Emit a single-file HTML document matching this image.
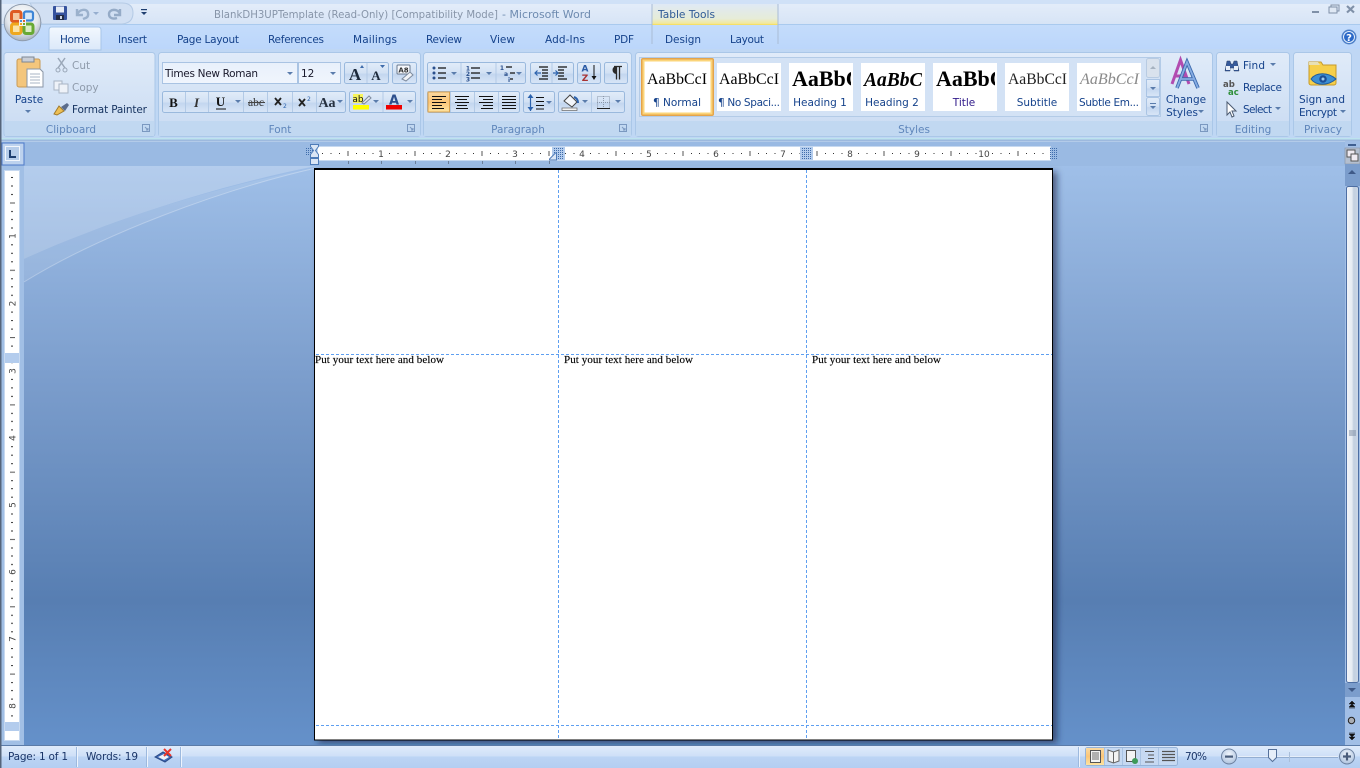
<!DOCTYPE html>
<html><head><meta charset="utf-8"><title>BlankDH3UPTemplate - Microsoft Word</title>
<style>
html,body{margin:0;padding:0;background:#bfdbff;overflow:hidden}
svg{display:block}
text{font-family:"DejaVu Sans","Liberation Sans",sans-serif;font-size:10.5px;fill:#15428b;white-space:pre}
.s{font-family:"Liberation Serif",serif;fill:#000}
.d{fill:#000;font-family:"Liberation Serif",serif;font-size:11px;stroke:#000;stroke-width:.15px}
.g{fill:#a4adb9}
.f{fill:#5f86bb;font-size:10.5px}
.k{fill:#000}
.r{fill:#444;font-size:9px}
.c{text-anchor:middle}
</style></head><body>
<svg width="1360" height="768" viewBox="0 0 1360 768" xmlns="http://www.w3.org/2000/svg">
<defs>
<linearGradient id="gt" x1="0" y1="0" x2="0" y2="1"><stop offset="0" stop-color="#e6eefa"/><stop offset="1" stop-color="#d6e4f6"/></linearGradient>
<linearGradient id="gtab" x1="0" y1="0" x2="0" y2="1"><stop offset="0" stop-color="#c4dcfb"/><stop offset="1" stop-color="#bbd6fb"/></linearGradient>
<linearGradient id="ggr" x1="0" y1="0" x2="0" y2="1"><stop offset="0" stop-color="#e0ebf9"/><stop offset="1" stop-color="#c9dbf2"/></linearGradient>
<linearGradient id="gbtn" x1="0" y1="0" x2="0" y2="1"><stop offset="0" stop-color="#e2ecf9"/><stop offset=".5" stop-color="#d2e1f4"/><stop offset=".55" stop-color="#c3d6ef"/><stop offset="1" stop-color="#d9e6f7"/></linearGradient>
<linearGradient id="gbox" x1="0" y1="0" x2="0" y2="1"><stop offset="0" stop-color="#e8f0fb"/><stop offset="1" stop-color="#f0f5fd"/></linearGradient>
<linearGradient id="gor" x1="0" y1="0" x2="0" y2="1"><stop offset="0" stop-color="#fbd9a0"/><stop offset=".5" stop-color="#fbc679"/><stop offset="1" stop-color="#fde3a0"/></linearGradient>
<linearGradient id="ghome" x1="0" y1="0" x2="0" y2="1"><stop offset="0" stop-color="#f3f8fe"/><stop offset="1" stop-color="#dce9f9"/></linearGradient>
<linearGradient id="gtt" x1="0" y1="0" x2="0" y2="1"><stop offset="0" stop-color="#dfe9f5"/><stop offset=".7" stop-color="#e6ecd8"/><stop offset=".93" stop-color="#f3e89a"/><stop offset="1" stop-color="#f8dc4a"/></linearGradient>
<linearGradient id="gdoc" x1="0" y1="0" x2="0" y2="1"><stop offset="0" stop-color="#9fbfe8"/><stop offset=".37" stop-color="#7b9dcc"/><stop offset=".75" stop-color="#577eb2"/><stop offset="1" stop-color="#6591ca"/></linearGradient>
<linearGradient id="gst" x1="0" y1="0" x2="0" y2="1"><stop offset="0" stop-color="#dfebfb"/><stop offset=".45" stop-color="#cfe0f7"/><stop offset=".5" stop-color="#bcd4f4"/><stop offset="1" stop-color="#b4cef1"/></linearGradient>
<linearGradient id="gsb" x1="0" y1="0" x2="1" y2="0"><stop offset="0" stop-color="#f2f5f9"/><stop offset=".45" stop-color="#e6ebf2"/><stop offset=".6" stop-color="#c3d0e0"/><stop offset="1" stop-color="#cbd7e6"/></linearGradient>
<radialGradient id="gorb" cx=".5" cy=".35" r=".7"><stop offset="0" stop-color="#ffffff"/><stop offset=".6" stop-color="#e3e7ec"/><stop offset="1" stop-color="#9aa7b8"/></radialGradient>
<radialGradient id="gzoom" cx=".5" cy=".35" r=".7"><stop offset="0" stop-color="#f0f5fc"/><stop offset="1" stop-color="#a9bfdc"/></radialGradient>
<filter id="bl" x="-5%" y="-5%" width="110%" height="110%"><feGaussianBlur stdDeviation="3.5"/></filter>
<pattern id="hr" x="314" y="147" width="67" height="13" patternUnits="userSpaceOnUse">
<rect x="8" y="6" width="1" height="1" fill="#333"/><rect x="16.5" y="6" width="1" height="1" fill="#333"/><rect x="25" y="6" width="1" height="1" fill="#333"/><rect x="33.5" y="4" width="1" height="5" fill="#555"/><rect x="42" y="6" width="1" height="1" fill="#333"/><rect x="50" y="6" width="1" height="1" fill="#333"/><rect x="58.5" y="6" width="1" height="1" fill="#333"/>
</pattern>
<pattern id="vr" x="5" y="169" width="14" height="67.3" patternUnits="userSpaceOnUse">
<rect x="6" y="8" width="2" height="1" fill="#333"/><rect x="6" y="16.5" width="2" height="1" fill="#333"/><rect x="6" y="25" width="2" height="1" fill="#333"/><rect x="5" y="33.5" width="5" height="1" fill="#555"/><rect x="6" y="42" width="2" height="1" fill="#333"/><rect x="6" y="50" width="2" height="1" fill="#333"/><rect x="6" y="58.5" width="2" height="1" fill="#333"/>
</pattern>
<pattern id="grid" x="0" y="0" width="2" height="2" patternUnits="userSpaceOnUse"><rect width="1" height="1" fill="#3f6cab"/></pattern>
<path id="ar" d="M0 0h6l-3 3z" fill="#5a7cac"/>
<path id="ad" d="M0 0h6l-3 3z" fill="#1f3f70"/>
</defs>

<!-- title bar -->
<rect width="1360" height="25" fill="url(#gt)"/>
<rect width="1360" height="4" fill="#d0e1f7"/>
<rect y="24" width="1360" height="1" fill="#a9caee"/>
<rect y="25" width="1360" height="25" fill="url(#gtab)"/>
<rect y="49" width="1360" height="92" fill="#bfd7f4"/>
<rect y="138" width="1360" height="1.5" fill="#bde3ee"/>
<rect y="139.5" width="1360" height="2" fill="#9db9de"/>

<!-- QAT -->
<path d="M30 3H122Q133 3 133 13T122 24H42Z" fill="#d2e0f3" stroke="#b4cae5"/>
<rect x="53" y="6" width="14" height="14" rx="1" fill="#35529e"/><rect x="56" y="6.500" width="8" height="6" fill="#e6ecf7"/><rect x="56" y="15" width="8" height="5" fill="#222b44"/><rect x="60" y="16" width="2" height="3" fill="#cfd7e6"/>
<path d="M77 9v6h6M77 15C79 9 87 8 88 13S85 18 83 19" fill="none" stroke="#9bb1cc" stroke-width="2.400"/>
<use href="#ar" x="93" y="12" opacity=".5"/>
<path d="M120 9v6h-6M120 14C118 8 109 9 109 14S114 19 117 18" fill="none" stroke="#95abc7" stroke-width="2.400"/>
<rect x="141" y="9" width="6" height="1.200" fill="#1f3f70"/><use href="#ad" x="141" y="12"/>

<text x="214" y="18" class="g" textLength="284" lengthAdjust="spacingAndGlyphs" style="fill:#8795a9">BlankDH3UPTemplate (Read-Only) [Compatibility Mode]</text>
<text x="502" y="18" textLength="89" lengthAdjust="spacingAndGlyphs" style="fill:#6e8bb0">- Microsoft Word</text>

<!-- Table tools -->
<rect x="652" y="4" width="126" height="21" fill="url(#gtt)"/>
<path d="M652 4V44M778 4V44" stroke="#a9bcd6" fill="none"/>
<text x="658" y="18" textLength="57" lengthAdjust="spacingAndGlyphs" style="fill:#2f5a96">Table Tools</text>

<!-- window controls -->
<rect x="1312" y="11" width="7" height="2" fill="#7f90a8"/>
<rect x="1331" y="5" width="8" height="6" fill="none" stroke="#7f90a8"/><rect x="1329" y="7" width="8" height="6" fill="#dfe8f4" stroke="#7f90a8"/>
<path d="M1347 6L1354 12.500M1354 6L1347 12.500" stroke="#7f90a8" stroke-width="2.200"/>

<!-- tabs -->
<path d="M49 50V30Q49 27 52 27H98Q101 27 101 30V50Z" fill="url(#ghome)" stroke="#a7c5e8"/>
<g>
<text x="60" y="43" textLength="30">Home</text>
<text x="118" y="43" textLength="29">Insert</text>
<text x="177" y="43" textLength="62">Page Layout</text>
<text x="268" y="43" textLength="56">References</text>
<text x="353" y="43" textLength="44">Mailings</text>
<text x="426" y="43" textLength="36">Review</text>
<text x="490" y="43" textLength="25">View</text>
<text x="545" y="43" textLength="40">Add-Ins</text>
<text x="614" y="43" textLength="20">PDF</text>
<text x="665" y="43" textLength="36">Design</text>
<text x="730" y="43" textLength="34">Layout</text>
</g>
<circle cx="1349" cy="37" r="7" fill="#2f6fd0" stroke="#5a88c8" stroke-width="1"/>
<circle cx="1349" cy="37" r="5.500" fill="#2a68c8" stroke="#e6eff9" stroke-width="1"/>
<text x="1349" y="41" class="c" style="font-size:10px;font-weight:bold;fill:#fff">?</text>

<!-- orb -->
<circle cx="22.500" cy="22.500" r="18.300" fill="url(#gorb)" stroke="#8e9bad"/>
<rect x="11.500" y="11.500" width="9.500" height="10" rx="2" fill="#f5c9a0" stroke="#de5c24" stroke-width="3"/>
<rect x="24" y="11.500" width="9" height="9" rx="2" fill="#d9e8f7" stroke="#3f86d6" stroke-width="2.200"/>
<rect x="11.500" y="24" width="9.500" height="9.500" rx="2" fill="#fbe4a8" stroke="#efa81e" stroke-width="3"/>
<rect x="24" y="24" width="9" height="9.500" rx="2" fill="#dcedc4" stroke="#68a934" stroke-width="3"/>
<rect x="19" y="19" width="7" height="7" fill="#f2f2f2"/><rect x="20" y="20" width="2" height="2" fill="#4b90d8"/><rect x="23" y="20" width="2" height="2" fill="#e0682a"/><rect x="20" y="23" width="2" height="2" fill="#efa81e"/><rect x="23" y="23" width="2" height="2" fill="#6fae3a"/>

<!-- ribbon groups -->
<g stroke="#aac7e8" fill="url(#ggr)">
<rect x="4" y="52.500" width="151" height="84" rx="3"/>
<rect x="158.500" y="52.500" width="262" height="84" rx="3"/>
<rect x="423.500" y="52.500" width="208" height="84" rx="3"/>
<rect x="635.500" y="52.500" width="577" height="84" rx="3"/>
<rect x="1216.500" y="52.500" width="73" height="84" rx="3"/>
<rect x="1293.500" y="52.500" width="58" height="84" rx="3"/>
</g>
<g fill="#c1d8f1">
<rect x="5" y="121" width="149" height="15"/><rect x="159" y="121" width="261" height="15"/><rect x="424" y="121" width="207" height="15"/><rect x="636" y="121" width="576" height="15"/><rect x="1217" y="121" width="72" height="15"/><rect x="1294" y="121" width="57" height="15"/>
</g>
<text x="71" y="133" class="c f">Clipboard</text>
<text x="280" y="133" class="c f">Font</text>
<text x="518" y="133" class="c f">Paragraph</text>
<text x="914" y="133" class="c f">Styles</text>
<text x="1253" y="133" class="c f">Editing</text>
<text x="1323" y="133" class="c f">Privacy</text>
<!-- launchers -->
<g fill="none" stroke="#7a98c0">
<path d="M142.500 131.500v-7h7v7zM145 127l3 3M148 128v2h-2" />
<path d="M407.500 131.500v-7h7v7zM410 127l3 3M413 128v2h-2"/>
<path d="M619.500 131.500v-7h7v7zM622 127l3 3M625 128v2h-2"/>
<path d="M1200.500 131.500v-7h7v7zM1203 127l3 3M1206 128v2h-2"/>
</g>

<!-- Clipboard -->
<rect x="17" y="59" width="23" height="28" rx="2" fill="#f4c67c" stroke="#c89a55"/>
<rect x="22" y="57" width="12" height="5" fill="#c9ced6" stroke="#7d8794"/>
<path d="M27 69h13l3 3v15h-16z" fill="#fff" stroke="#8a95a5"/>
<path d="M30 74h10M30 77h10M30 80h10M30 83h10" stroke="#a9b4c4"/>
<text x="29" y="103" class="c">Paste</text>
<use href="#ar" x="25" y="110"/>
<path d="M58 58l7 10M65 58l-7 10" stroke="#9aa7b8" stroke-width="1.500"/><circle cx="58" cy="70" r="2" fill="none" stroke="#9aa7b8"/><circle cx="65" cy="70" r="2" fill="none" stroke="#9aa7b8"/>
<text x="72" y="69" style="fill:#8f9bab">Cut</text>
<rect x="54" y="81" width="8" height="9" fill="#eef2f8" stroke="#a8b4c4"/><rect x="59" y="84" width="9" height="9" fill="#eef2f8" stroke="#a8b4c4"/>
<text x="72" y="91" style="fill:#8f9bab">Copy</text>
<path d="M54 114l5-8 5 5-7 4z" fill="#eebf54" stroke="#a07a2a"/><path d="M61 107l6-4 2 2-4 6z" fill="#5a6c8c"/>
<text x="72" y="113" textLength="75" style="fill:#15325f">Format Painter</text>

<!-- Font row 1 -->
<rect x="162.500" y="62.500" width="135" height="21" fill="url(#gbox)" stroke="#a9c3e3"/>
<rect x="298.500" y="62.500" width="42" height="21" fill="url(#gbox)" stroke="#a9c3e3"/>
<text x="165" y="77" textLength="93" style="fill:#1a1a2c">Times New Roman</text>
<text x="301" y="77" style="fill:#1a1a2c">12</text>
<use href="#ar" x="287" y="72"/><use href="#ar" x="330" y="72"/>
<rect x="344.500" y="62.500" width="44" height="21" rx="2" fill="url(#gbtn)" stroke="#9ab9dd"/>
<path d="M367 63V83" stroke="#b3cae6"/>
<text x="355" y="80" class="c s" style="font-size:17px;font-weight:bold;fill:#1d2a3c">A</text>
<text x="376" y="80" class="c s" style="font-size:13px;font-weight:bold;fill:#1d2a3c">A</text>
<path d="M360 68l2-3 2 3z" fill="#3f6cab"/><path d="M380 65h5l-2.500 3z" fill="#3f6cab"/>
<rect x="392.500" y="62.500" width="24" height="21" rx="2" fill="url(#gbtn)" stroke="#9ab9dd"/>
<rect x="397" y="65" width="13" height="9" rx="1" fill="#f6f8fc" stroke="#6a7a90"/>
<text x="403.500" y="72.500" class="c" style="font-size:7px;fill:#333;font-weight:bold">A8</text>
<path d="M402 79l8-7 3 3-7 6z" fill="#f1f3f7" stroke="#7d8b9e"/>

<!-- Font row 2 -->
<rect x="162.500" y="91.500" width="183" height="21" rx="2" fill="url(#gbtn)" stroke="#9ab9dd"/>
<path d="M185.500 92V112M208.500 92V112M243.500 92V112M267.500 92V112M292.500 92V112M316.500 92V112" stroke="#b3cae6"/>
<text x="173.500" y="107" class="c s" style="font-size:13px;font-weight:bold;fill:#111">B</text>
<text x="196.500" y="107" class="c s" style="font-size:13px;font-style:italic;font-weight:bold;fill:#333">I</text>
<text x="220.500" y="106" class="c s" style="font-size:13px;font-weight:bold;fill:#111">U</text>
<rect x="216" y="108.500" width="10" height="1" fill="#111"/>
<use href="#ar" x="235" y="100"/>
<text x="256" y="106" class="c s" style="font-size:11.500px;fill:#333">abc</text>
<rect x="248" y="102" width="17" height="1" fill="#444"/>
<path d="M275 98l6 7M281 98l-6 7" stroke="#222" stroke-width="1.800"/><text x="283" y="108" style="font-size:6px;fill:#2a62ad">2</text>
<path d="M299 99l6 7M305 99l-6 7" stroke="#222" stroke-width="1.800"/><text x="307" y="101" style="font-size:6px;fill:#2a62ad">2</text>
<text x="327" y="107" class="c s" style="font-size:14px;font-weight:bold;fill:#26303f">Aa</text>
<use href="#ar" x="337" y="100"/>
<rect x="349.500" y="91.500" width="66" height="21" rx="2" fill="url(#gbtn)" stroke="#9ab9dd"/>
<path d="M383 92V112" stroke="#b3cae6"/>
<rect x="353" y="94" width="10" height="9" fill="#f7f45c"/>
<text x="358" y="102" class="c" style="font-size:9px;fill:#111">ab</text>
<path d="M362 103l7-7 2 2-7 6z" fill="#e9edf3" stroke="#7d8b9e"/>
<rect x="353" y="105" width="16" height="4.500" fill="#ffff00"/>
<use href="#ar" x="373" y="100"/>
<text x="394" y="104.500" class="c" style="font-size:13px;font-weight:bold;fill:#2d4f8c">A</text>
<rect x="386" y="105" width="16" height="4.500" fill="#ee0000"/>
<use href="#ar" x="407" y="100"/>

<!-- Paragraph row 1 -->
<rect x="427.500" y="62.500" width="98" height="21" rx="2" fill="url(#gbtn)" stroke="#9ab9dd"/>
<path d="M461 63V83M496 63V83" stroke="#b3cae6"/>
<g fill="#2a4f8c"><circle cx="434" cy="68" r="1.500"/><circle cx="434" cy="73" r="1.500"/><circle cx="434" cy="78" r="1.500"/></g>
<path d="M438 68h8M438 73h8M438 78h8M471 68h9M471 73h9M471 78h9M506 67h6M510 73h5M510 79h3" stroke="#111" stroke-width="1.200"/>
<text x="468" y="70.500" class="c" style="font-size:6px;fill:#2a4f8c;font-weight:bold">1</text><text x="468" y="76" class="c" style="font-size:6px;fill:#2a4f8c;font-weight:bold">2</text><text x="468" y="81.500" class="c" style="font-size:6px;fill:#2a4f8c;font-weight:bold">3</text>
<text x="502" y="70" class="c" style="font-size:6px;fill:#2a4f8c;font-weight:bold">1</text><text x="506" y="76" class="c" style="font-size:6px;fill:#2a4f8c;font-weight:bold">a</text><text x="509" y="82" class="c" style="font-size:6px;fill:#2a4f8c;font-weight:bold">i</text>
<use href="#ar" x="451" y="72"/><use href="#ar" x="486" y="72"/><use href="#ar" x="516" y="72"/>
<rect x="530.500" y="62.500" width="43" height="21" rx="2" fill="url(#gbtn)" stroke="#9ab9dd"/>
<path d="M552 63V83" stroke="#b3cae6"/>
<path d="M539 67h9M542 70h6M542 73h6M542 76h6M539 79h9M558 67h9M558 70h6M558 73h6M558 76h6M558 79h9" stroke="#111" stroke-width="1.200"/>
<path d="M541 73h-6m2.500-2.500L535 73l2.500 2.500M553 73h5m-2.500-2.500L558 73l-2.500 2.500" fill="none" stroke="#2b62ad" stroke-width="1.200"/>
<rect x="577.500" y="62.500" width="23" height="21" rx="2" fill="url(#gbtn)" stroke="#9ab9dd"/>
<text x="585" y="71.500" class="c" style="font-size:9px;font-weight:bold;fill:#2a5aa5">A</text><text x="585" y="81" class="c" style="font-size:9px;font-weight:bold;fill:#a83232">Z</text>
<path d="M594 65v13" stroke="#111"/><path d="M591.500 76l2.500 4 2.500-4z" fill="#111"/>
<rect x="604.500" y="62.500" width="23" height="21" rx="2" fill="url(#gbtn)" stroke="#9ab9dd"/>
<path d="M616.500 66.500a3.500 3.500 0 0 0 0 7z" fill="#2a2a2a" stroke="#2a2a2a"/><path d="M616.500 66.500V79.500M619.500 66.500V79.500M614 66.500H622" fill="none" stroke="#2a2a2a" stroke-width="1.300"/>

<!-- Paragraph row 2 -->
<rect x="427.500" y="91.500" width="92" height="21" rx="2" fill="url(#gbtn)" stroke="#9ab9dd"/>
<rect x="428" y="92" width="21.500" height="20" fill="url(#gor)" stroke="#d9a14f"/>
<path d="M450.500 92V112M474.500 92V112M498.500 92V112" stroke="#b3cae6"/>
<path d="M432 96.500h14M432 99.500h10M432 102.500h14M432 105.500h10M432 108.500h12" stroke="#111"/>
<path d="M455 96.500h14M457 99.500h10M455 102.500h14M457 105.500h10M456 108.500h12" stroke="#111"/>
<path d="M479 96.500h14M483 99.500h10M479 102.500h14M483 105.500h10M481 108.500h12" stroke="#111"/>
<path d="M502 96.500h14M502 99.500h14M502 102.500h14M502 105.500h14M502 108.500h14" stroke="#111"/>
<rect x="523.500" y="91.500" width="31" height="21" rx="2" fill="url(#gbtn)" stroke="#9ab9dd"/>
<path d="M530.500 95v16" stroke="#2b62ad" stroke-width="1.200"/><path d="M527.500 98l3-4 3 4zM527.500 107l3 4 3-4z" fill="#2b62ad"/>
<path d="M536 97.500h8M536 101.500h8M536 105.500h8M536 109h8" stroke="#111" stroke-width="1.100"/>
<use href="#ar" x="546" y="101"/>
<rect x="558.500" y="91.500" width="66" height="21" rx="2" fill="url(#gbtn)" stroke="#9ab9dd"/>
<path d="M591.500 92V112" stroke="#b3cae6"/>
<path d="M564 101l6-6 7 7-5 5z" fill="#f3f6fb" stroke="#444"/><path d="M574 97c3 1 4 3 4 6" fill="none" stroke="#2b62ad" stroke-width="2"/>
<rect x="562" y="108" width="15" height="2.500" fill="#f3f3f3" stroke="#666" stroke-width=".7"/>
<use href="#ar" x="582" y="100"/>
<rect x="597.500" y="96.500" width="12" height="12" fill="none" stroke="#8b98aa" stroke-dasharray="1 1"/><path d="M603.500 96v13M597 102.500h13" stroke="#8b98aa" stroke-dasharray="1 1"/><path d="M597 108.500h13" stroke="#222"/>
<use href="#ar" x="615" y="100"/>

<!-- Styles gallery -->
<rect x="639.500" y="57.500" width="521" height="59" fill="#d3e2f5" stroke="#b3cbe7"/>
<rect x="642" y="59" width="71" height="56" rx="1" fill="#fff" stroke="#e4a44a" stroke-width="2"/>
<rect x="643.500" y="60.500" width="68" height="53" fill="none" stroke="#fbd479" stroke-width="2"/>
<g fill="#fff"><rect x="717" y="63" width="64" height="48"/><rect x="789" y="63" width="64" height="48"/><rect x="861" y="63" width="64" height="48"/><rect x="933" y="63" width="64" height="48"/><rect x="1005" y="63" width="64" height="48"/><rect x="1077" y="63" width="64" height="48"/></g>
<text x="647" y="84" class="s" style="font-size:16px" textLength="60" lengthAdjust="spacingAndGlyphs">AaBbCcI</text>
<text x="719" y="84" class="s" style="font-size:16px" textLength="60" lengthAdjust="spacingAndGlyphs">AaBbCcI</text>
<svg x="789" y="63" width="62" height="48"><text x="3" y="23" class="s" style="font-size:22px;font-weight:bold">AaBbC</text></svg>
<svg x="861" y="63" width="61" height="48"><text x="3" y="23" class="s" style="font-size:19.500px;font-weight:bold;font-style:italic">AaBbCc</text></svg>
<svg x="933" y="63" width="62" height="48"><text x="3" y="23" class="s" style="font-size:22px;font-weight:bold">AaBbC</text></svg>
<text x="1008" y="84" class="s" style="font-size:16px;fill:#222" textLength="59" lengthAdjust="spacingAndGlyphs">AaBbCcI</text>
<text x="1080" y="84" class="s" style="font-size:16px;font-style:italic;fill:#8a8a8a" textLength="59" lengthAdjust="spacingAndGlyphs">AaBbCcI</text>
<g style="fill:#15428b">
<text x="677" y="106" class="c">¶ Normal</text>
<text x="749" y="106" class="c" textLength="62">¶ No Spaci...</text>
<text x="820" y="106" class="c">Heading 1</text>
<text x="892" y="106" class="c">Heading 2</text>
<text x="964" y="106" class="c" style="fill:#301a8a">Title</text>
<text x="1037" y="106" class="c">Subtitle</text>
<text x="1109" y="106" class="c" textLength="60">Subtle Em...</text>
</g>
<rect x="1146.500" y="58.500" width="13" height="19" rx="2" fill="#d9e2ed" stroke="#b8cbe2"/>
<rect x="1146.500" y="79.500" width="13" height="17" fill="url(#gbtn)" stroke="#aac4e4"/>
<rect x="1146.500" y="97.500" width="13" height="18" rx="2" fill="url(#gbtn)" stroke="#aac4e4"/>
<path d="M1150 69h6l-3-3z" fill="#a6b2c0"/><use href="#ar" x="1150" y="87"/>
<rect x="1150" y="103" width="6" height="1" fill="#5a7cac"/><use href="#ar" x="1150" y="106"/>
<!-- Change styles -->
<path d="M1172 84L1180.500 60L1189 84M1175 76H1187" fill="none" stroke="#b24cb0" stroke-width="3"/>
<path d="M1177 88L1187 62L1198 88M1181 79H1194" fill="none" stroke="#3c69ad" stroke-width="3.600"/>
<path d="M1177 88L1187 62L1198 88M1181 79H1194" fill="none" stroke="#86ade3" stroke-width="1.800"/>
<text x="1186" y="103" class="c">Change</text>
<text x="1182" y="116" class="c">Styles</text>
<use href="#ar" x="1198" y="110"/>

<!-- Editing -->
<path d="M1225 71l2-10h3l1 3h2l1-3h3l2 10h-5v-3h-4v3z" fill="#35599a" stroke="#2a3e66" stroke-width=".5"/><rect x="1226" y="66" width="4" height="4" fill="#e7eef8"/><rect x="1234" y="66" width="4" height="4" fill="#e7eef8"/>
<text x="1243" y="69" textLength="22">Find</text><use href="#ar" x="1270" y="63"/>
<text x="1223" y="87" style="font-size:8.500px;fill:#555;font-weight:bold">ab</text>
<text x="1228" y="95" style="font-size:8.500px;fill:#2f8f3a;font-weight:bold">ac</text>
<text x="1243" y="91" textLength="39">Replace</text>
<path d="M1227 102v13l3-3 2 5 2-1-2-5h4z" fill="#fff" stroke="#4b5a70"/>
<text x="1243" y="113" textLength="29">Select</text><use href="#ar" x="1275" y="107"/>

<!-- Privacy -->
<path d="M1309 62h12l2 3h13v18a2 2 0 0 1-2 2h-23a2 2 0 0 1-2-2z" fill="#f6cf4a" stroke="#c69a2a"/>
<path d="M1309 62h9l2 3h-11z" fill="#e8e0b5"/>
<path d="M1311 79c5-7 17-7 25 0-8 7-20 7-25 0z" fill="#3c8fd4" stroke="#205b9c"/><circle cx="1323" cy="79" r="3.800" fill="#1d4f95"/><circle cx="1323" cy="79" r="1.500" fill="#9ccbf0"/>
<text x="1299" y="103" textLength="46">Sign and</text>
<text x="1299" y="116" textLength="38">Encrypt</text><use href="#ar" x="1340" y="110"/>

<!-- ruler band -->
<rect y="141" width="1360" height="25" fill="#9abae3"/>
<rect y="141" width="1360" height="1" fill="#b3cbe9"/>
<rect x="0" y="166" width="24" height="580" fill="#a1bfe5"/>
<rect x="2" y="143" width="22" height="22" fill="#bdd2ee" stroke="#4d79c8"/>
<rect x="5.500" y="146.500" width="14" height="14" fill="#b7cdea" stroke="#f2f6fc"/>
<path d="M10 150v7h6" fill="none" stroke="#1f3f70" stroke-width="2"/>

<!-- doc bg -->
<rect x="24" y="166" width="1321" height="580" fill="url(#gdoc)"/>
<path d="M24 166H316C220 185 110 220 24 259Z" fill="#fff" fill-opacity=".22"/>
<path d="M24 259C110 220 220 185 316 168C220 190 100 235 24 282Z" fill="#fff" fill-opacity=".09"/>
<path d="M24 282C100 235 220 190 316 168" fill="none" stroke="#fff" stroke-opacity=".28"/>

<!-- vertical ruler -->
<rect x="5" y="171" width="14" height="569" fill="#b3cced"/>
<rect x="5" y="171" width="14" height="182" fill="#fff"/>
<rect x="5" y="363" width="14" height="359" fill="#fff"/>
<rect x="5" y="731" width="14" height="9" fill="#fff"/>
<rect x="5" y="171" width="14" height="182" fill="url(#vr)"/>
<rect x="5" y="363" width="14" height="359" fill="url(#vr)"/>
<rect x="4.500" y="170.500" width="15" height="570" fill="none" stroke="#c7d9f0"/>
<g class="r">
<text transform="translate(15.500,236) rotate(-90)" class="c r">1</text>
<text transform="translate(15.500,303.500) rotate(-90)" class="c r">2</text>
<text transform="translate(15.500,371) rotate(-90)" class="c r">3</text>
<text transform="translate(15.500,438) rotate(-90)" class="c r">4</text>
<text transform="translate(15.500,505) rotate(-90)" class="c r">5</text>
<text transform="translate(15.500,572) rotate(-90)" class="c r">6</text>
<text transform="translate(15.500,639) rotate(-90)" class="c r">7</text>
<text transform="translate(15.500,706) rotate(-90)" class="c r">8</text>
</g>

<!-- horizontal ruler -->
<rect x="318" y="147" width="732" height="13" fill="#fff"/>
<rect x="318" y="147" width="732" height="13" fill="url(#hr)"/>
<rect x="317.500" y="146.500" width="733" height="14" fill="none" stroke="#c7d9f0"/>
<rect x="552" y="147" width="13" height="13" fill="#b3cced"/><rect x="553" y="148" width="11" height="11" fill="url(#grid)"/>
<rect x="800" y="147" width="13" height="13" fill="#b3cced"/><rect x="801" y="148" width="11" height="11" fill="url(#grid)"/>
<rect x="1050" y="148" width="8" height="11" fill="url(#grid)"/>
<rect x="306" y="148" width="8" height="8" fill="url(#grid)"/>
<g class="r">
<text x="381" y="157" class="c r">1</text><text x="448" y="157" class="c r">2</text><text x="515" y="157" class="c r">3</text><text x="582" y="157" class="c r">4</text><text x="649" y="157" class="c r">5</text><text x="716" y="157" class="c r">6</text><text x="783" y="157" class="c r">7</text><text x="850" y="157" class="c r">8</text><text x="917" y="157" class="c r">9</text><text x="984" y="157" class="c r">10</text>
</g>
<path d="M348.500 161v3M381.500 161v3M415.500 161v3M448.500 161v3M482.500 161v3M515.500 161v3M549.500 161v3" stroke="#6b7f9a"/>
<path d="M310.500 144.500h8v2l-3 4 3 4v3h-8v-3l3-4-3-4z" fill="#dbe6f5" stroke="#4f7cb8"/>
<rect x="310.500" y="158.500" width="8" height="6" fill="#dbe6f5" stroke="#4f7cb8"/>
<path d="M549.500 159l6-6h1v7h-7z" fill="#dbe6f5" stroke="#4f7cb8"/>

<!-- page -->
<rect x="318" y="172" width="739" height="571" fill="#12223c" fill-opacity=".6" filter="url(#bl)"/>
<rect x="314.500" y="169" width="738" height="571" fill="#fff" stroke="#000"/>
<rect x="314" y="168" width="739" height="2" fill="#000"/>
<path d="M558.500 170V739M806.500 170V739" stroke="#5f9ff0" stroke-dasharray="3 2"/>
<path d="M316 354.500H1052M316 725.500H1052" stroke="#5f9ff0" stroke-dasharray="3 2"/>
<text x="315" y="363" class="d" textLength="129">Put your text here and below</text>
<text x="564" y="363" class="d" textLength="129">Put your text here and below</text>
<text x="812" y="363" class="d" textLength="129">Put your text here and below</text>

<!-- vertical scrollbar -->
<rect x="1345" y="141" width="15" height="605" fill="#a2bfe6"/>
<rect x="1348" y="144" width="8" height="2" fill="#3f5f90"/>
<rect x="1345" y="148" width="15" height="16" fill="#b4bfcf" stroke="#8b98ab" stroke-width=".7"/>
<rect x="1347" y="150" width="8" height="7" fill="#f0ebf2" stroke="#555"/><rect x="1351" y="154" width="7" height="7" fill="#f0ebf2" stroke="#555"/>
<rect x="1345" y="164" width="15" height="22" fill="#7b9dcc"/>
<path d="M1348 174l4-4 4 4z" fill="#3f5a88"/>
<rect x="1346.500" y="186.500" width="12" height="496" rx="2" fill="url(#gsb)" stroke="#4d6ea3"/>
<path d="M1349 431h7M1349 433h7M1349 435h7" stroke="#7d8da3"/>
<rect x="1345" y="683" width="15" height="14" fill="#7b9dcc"/>
<path d="M1348 688h8l-4 4z" fill="#3f5a88"/>
<path d="M1352 701l-3 3h6zM1352 704l-3 3h6zM1349 708h6" fill="#111" stroke="#111" stroke-width=".5"/>
<circle cx="1351.500" cy="720.500" r="3.200" fill="#a9adb3" stroke="#222"/>
<path d="M1349 733h6M1352 740l-3-3h6zM1352 737l-3-3h6z" fill="#111" stroke="#111" stroke-width=".5"/>

<!-- status bar -->
<rect y="745" width="1360" height="1" fill="#5b7ba8"/>
<rect y="746" width="1360" height="22" fill="url(#gst)"/>
<path d="M76.500 747V767M146.500 747V767M180.500 747V767M1078.500 747V767" stroke="#9db9de"/>
<path d="M77.500 747V767M147.500 747V767M181.500 747V767M1079.500 747V767" stroke="#eef4fd"/>
<text x="8" y="760" textLength="60" style="fill:#1a3568">Page: 1 of 1</text>
<text x="86" y="760" textLength="52" style="fill:#1a3568">Words: 19</text>
<path d="M155 757l8-5 9 5-7 5z" fill="#3f68b4" stroke="#2a4a86"/><path d="M158 757l6-3 5 3-5 3z" fill="#f0f4fa"/>
<path d="M164 749l7 7M171 749l-7 7" stroke="#e8352a" stroke-width="2"/>

<rect x="1085.500" y="747.500" width="92" height="18" rx="2" fill="#c6d9f2" stroke="#96b3d8"/>
<rect x="1086" y="748" width="18" height="17" fill="url(#gor)"/>
<path d="M1104.500 748V765M1122.500 748V765M1140.500 748V765M1158.500 748V765" stroke="#a9c3e3"/>
<rect x="1090.500" y="750.500" width="10" height="12" fill="#f3f3f3" stroke="#555"/><path d="M1092 753h7M1092 755h7M1092 757h7M1092 759h7" stroke="#444" stroke-width=".8"/>
<path d="M1108 750l5.500 2 5.500-2v11l-5.500 2-5.500-2zM1113.500 752v11" fill="#f3f3f3" stroke="#666"/>
<rect x="1126.500" y="750.500" width="9" height="11" fill="#f3f3f3" stroke="#555"/><circle cx="1135" cy="761" r="3" fill="#3d9a58"/>
<path d="M1145 751.500h9M1148 755h6M1148 758.500h6M1145 762h9" stroke="#555"/>
<path d="M1162 751.500h13M1162 754.500h13M1162 757.500h13M1162 760.500h13" stroke="#555" stroke-width="1.200"/>
<text x="1185" y="760" textLength="22" style="fill:#1a3568">70%</text>
<circle cx="1229" cy="756.500" r="7.500" fill="url(#gzoom)" stroke="#6d82a1"/><rect x="1225" y="755.500" width="8" height="2.200" fill="#4a5d7b"/>
<circle cx="1347" cy="756.500" r="7.500" fill="url(#gzoom)" stroke="#6d82a1"/><path d="M1343 756.500h8M1347 752.500v8" stroke="#4a5d7b" stroke-width="2.200"/>
<path d="M1238 756.500H1338" stroke="#e6eef9"/><path d="M1238 757.500H1338" stroke="#94aed1"/>
<path d="M1289.500 752v10" stroke="#a9bed9"/>
<path d="M1268.500 749.500h8v8l-4 4-4-4z" fill="#e6eef9" stroke="#56719a"/>

<!-- window left edge -->
<rect x="0" y="0" width="1.500" height="768" fill="#55647a"/>
</svg>
</body></html>
